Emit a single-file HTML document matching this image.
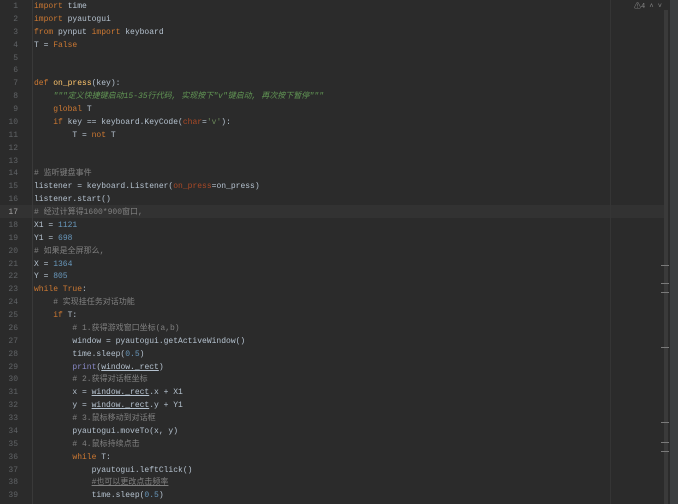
<!DOCTYPE html><html><head><meta charset="utf-8"><style>
body{margin:0;width:678px;height:504px;background:#2b2b2b;overflow:hidden;position:relative;font-family:"Liberation Mono","Noto Sans CJK SC",monospace;font-size:8px;color:#b5c2cf}
.hl{position:absolute;left:0;top:205px;width:664px;height:13px;background:#323232}
.g{position:absolute;left:32px;top:0;width:1px;height:504px;background:#393939}
.m{position:absolute;left:610px;top:0;width:1px;height:504px;background:#353535}
.ln{position:absolute;left:0;top:1px;width:18px;text-align:right;color:#606366;line-height:12.87px;white-space:pre}
.code{position:absolute;left:34px;top:1px;line-height:12.87px;white-space:pre}
.k{color:#cc7832}.s{color:#629755;font-style:italic}.n{color:#6897bb}.c{color:#808080}.f{color:#ffc66d}.p{color:#aa4926}.b{color:#8888c6}.u{text-decoration:underline}.st{color:#6a8759}
.sb{position:absolute;left:664px;top:10px;width:4px;height:494px;background:#3a3a3a}
.rb{position:absolute;left:670px;top:0;width:8px;height:504px;background:#3c3f41}
.tk{position:absolute;height:1px;width:8px;left:661px;background:#7a7a7a}
</style></head><body>
<div class="hl"></div><div class="g"></div><div class="m"></div>
<div class="ln">1
2
3
4
5
6
7
8
9
10
11
12
13
14
15
16
<span style="color:#a4a3a3">17</span>
18
19
20
21
22
23
24
25
26
27
28
29
30
31
32
33
34
35
36
37
38
39</div>
<div class="code"><span class="k">import</span> time
<span class="k">import</span> pyautogui
<span class="k">from</span> pynput <span class="k">import</span> keyboard
T = <span class="k">False</span>


<span class="k">def</span> <span class="f">on_press</span>(key):
    <span class="s">"""定义快捷键启动15-35行代码, 实现按下"v"键启动, 再次按下暂停"""</span>
    <span class="k">global</span> T
    <span class="k">if</span> key == keyboard.KeyCode(<span class="p">char</span>=<span class="st">'v'</span>):
        T = <span class="k">not</span> T


<span class="c"># 监听键盘事件</span>
listener = keyboard.Listener(<span class="p">on_press</span>=on_press)
listener.start()
<span class="c"># 经过计算得1600*900窗口,</span>
X1 = <span class="n">1121</span>
Y1 = <span class="n">698</span>
<span class="c"># 如果是全屏那么,</span>
X = <span class="n">1364</span>
Y = <span class="n">805</span>
<span class="k">while True</span>:
    <span class="c"># 实现挂任务对话功能</span>
    <span class="k">if</span> T:
        <span class="c"># 1.获得游戏窗口坐标(a,b)</span>
        window = pyautogui.getActiveWindow()
        time.sleep(<span class="n">0.5</span>)
        <span class="b">print</span>(<span class="u">window._rect</span>)
        <span class="c"># 2.获得对话框坐标</span>
        x = <span class="u">window._rect</span>.x + X1
        y = <span class="u">window._rect</span>.y + Y1
        <span class="c"># 3.鼠标移动到对话框</span>
        pyautogui.moveTo(x, y)
        <span class="c"># 4.鼠标持续点击</span>
        <span class="k">while</span> T:
            pyautogui.leftClick()
            <span class="c u">#也可以更改点击频率</span>
            time.sleep(<span class="n">0.5</span>)</div>
<div style="position:absolute;left:634px;top:1px;font-size:7px;color:#888">⚠4 ˄ ˅</div>
<div class="sb"></div><div class="rb"></div>
<div class="tk" style="top:265px"></div><div class="tk" style="top:283px"></div><div class="tk" style="top:292px"></div><div class="tk" style="top:347px"></div><div class="tk" style="top:422px"></div><div class="tk" style="top:442px"></div><div class="tk" style="top:451px"></div>
</body></html>
